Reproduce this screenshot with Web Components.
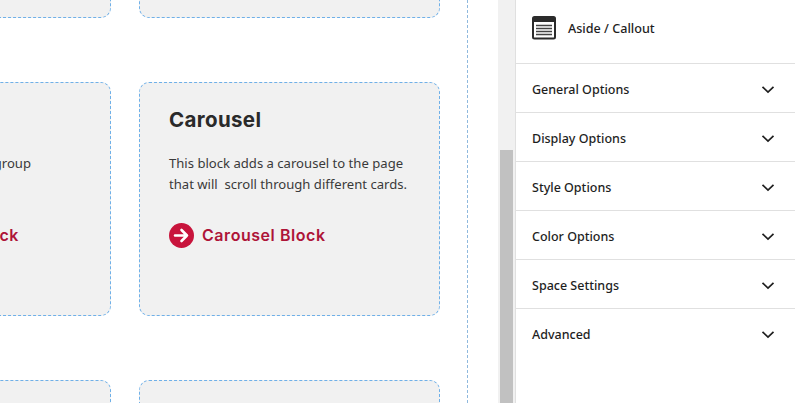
<!DOCTYPE html>
<html><head><meta charset="utf-8"><style>
html,body{margin:0;padding:0;height:403px;overflow:hidden;background:#fff}
body{display:flex;font-family:"Noto Sans",sans-serif}
</style></head><body>
<block-canvas>
  <block-card></block-card>
  <block-card></block-card>
  <block-card clipped>
    <span slot="body">group</span>
    <span slot="cta">ck</span>
  </block-card>
  <block-card>
    <span slot="title">Carousel</span>
    <span slot="body">This block adds a carousel to the page<br>that will&nbsp; scroll through different cards.</span>
    <cta-arrow slot="icon"></cta-arrow>
    <span slot="cta">Carousel Block</span>
  </block-card>
  <block-card></block-card>
  <block-card></block-card>
</block-canvas>
<page-scroll></page-scroll>
<side-panel>
  <panel-row>General Options</panel-row>
  <panel-row>Display Options</panel-row>
  <panel-row>Style Options</panel-row>
  <panel-row>Color Options</panel-row>
  <panel-row>Space Settings</panel-row>
  <panel-row last>Advanced</panel-row>
</side-panel>
<script>
class BlockCard extends HTMLElement{
  constructor(){super();const s=this.attachShadow({mode:'open'});
  s.innerHTML=`<style>
  :host{display:block;box-sizing:border-box;background:#f1f1f1;border:1px dashed #6fb0e8;border-radius:10px;height:234px;padding:23px 29px;overflow:hidden}
  :host([clipped]){padding-right:79px;text-align:right}
  h3{margin:0;height:28px;font:700 20.500px/28px Inter,sans-serif;letter-spacing:.35px;color:#2a2a2a}
  p{margin:19px 0 0;min-height:42px;font:400 13.100px/21px "Noto Sans",sans-serif;color:#3a3a3a;white-space:nowrap}
  .cta{display:flex;align-items:center;gap:8px;margin-top:28px;height:25px;font:600 16px/25px Inter,sans-serif;letter-spacing:.55px;color:#ae1438;white-space:nowrap}
  :host([clipped]) .cta{justify-content:flex-end;margin-right:12px}
  </style><h3><slot name="title"></slot></h3><p><slot name="body"></slot></p><div class="cta"><slot name="icon"></slot><slot name="cta"></slot></div>`;
  }
}
customElements.define('block-card',BlockCard);
class CtaArrow extends HTMLElement{
  constructor(){super();this.attachShadow({mode:'open'}).innerHTML=`<style>:host{display:block;width:25px;height:25px}svg{display:block}</style><svg width="25" height="25" viewBox="0 0 25 25"><circle cx="12.500" cy="12.500" r="12.500" fill="#c8143c"/><path d="M6 12.500h12M12.500 7l5.500 5.500-5.500 5.500" fill="none" stroke="#fff" stroke-width="2.600" stroke-linecap="round" stroke-linejoin="round"/></svg>`;}
}
customElements.define('cta-arrow',CtaArrow);
class BlockCanvas extends HTMLElement{
  constructor(){super();this.attachShadow({mode:'open'}).innerHTML=`<style>
  :host{display:block;box-sizing:border-box;flex:none;width:468px;height:403px;overflow:hidden;border-right:1px dashed #8fb9de}
  .grid{display:grid;grid-template-columns:301px 301px;column-gap:28px;row-gap:64px;margin:-216px 0 0 -190px}
  </style><div class="grid"><slot></slot></div>`;}
}
customElements.define('block-canvas',BlockCanvas);
class PageScroll extends HTMLElement{
  constructor(){super();this.attachShadow({mode:'open'}).innerHTML=`<style>
  :host{display:flex;flex:none;width:47px;height:403px;justify-content:flex-end}
  .track{width:17px;background:#f1f1f1;display:flex;flex-direction:column;justify-content:flex-end;align-items:center}
  .thumb{width:13px;height:253px;background:#c1c1c1}
  </style><div class="track"><div class="thumb"></div></div>`;}
}
customElements.define('page-scroll',PageScroll);
class PanelRow extends HTMLElement{
  constructor(){super();this.attachShadow({mode:'open'}).innerHTML=`<style>
  :host{display:flex;align-items:center;justify-content:space-between;box-sizing:border-box;height:49px;border-bottom:1px solid #e0e0e0;padding:3px 20px 0 16px;font:500 12.500px/16px "Noto Sans",sans-serif;color:#1e1e1e}
  :host([last]){border-bottom:0;padding-bottom:1px}
  svg{display:block}
  </style><slot></slot><svg width="14" height="9" viewBox="0 0 14 9"><path d="M1.500 1.800L7 7l5.500-5.200" fill="none" stroke="#1e1e1e" stroke-width="1.700"/></svg>`;}
}
customElements.define('panel-row',PanelRow);
class SidePanel extends HTMLElement{
  constructor(){super();this.attachShadow({mode:'open'}).innerHTML=`<style>
  :host{display:block;box-sizing:border-box;flex:none;width:280px;height:403px;border-left:1px solid #e0e0e0;background:#fff}
  header{display:flex;align-items:center;gap:12px;height:64px;box-sizing:border-box;border-bottom:1px solid #e0e0e0;padding:0 16px 7px;font:500 12.600px/16px "Noto Sans",sans-serif;color:#1e1e1e}
  svg{display:block;flex:none}
  span{padding-top:2px}
  </style><header><svg width="24" height="24" viewBox="0 0 24 24"><rect x="1" y="1" width="22" height="21.500" rx="1.500" fill="#fff" stroke="#2b2b2b" stroke-width="2"/><rect x="1" y="1" width="22" height="5" fill="#2b2b2b"/><path d="M4 9.500h16M4 12.500h16M4 15.500h16M4 18.500h16" stroke="#444" stroke-width="1.500"/></svg><span>Aside / Callout</span></header><slot></slot>`;}
}
customElements.define('side-panel',SidePanel);
</script>
</body></html>
